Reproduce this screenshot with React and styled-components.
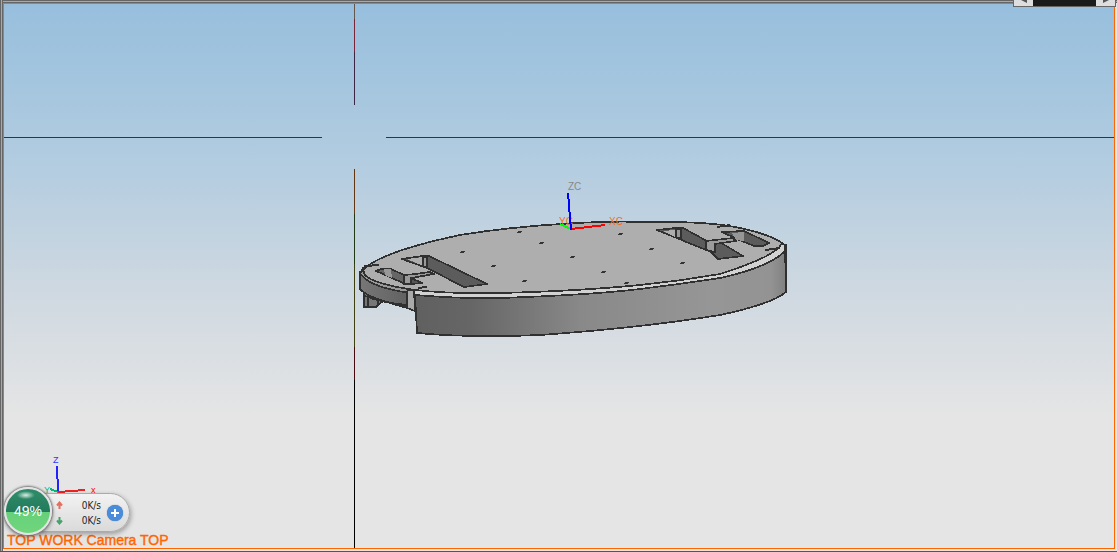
import React from 'react';
import styled, { createGlobalStyle } from 'styled-components';

const Global = createGlobalStyle`
  *, *::before, *::after { box-sizing: border-box; }
  body { margin: 0; overflow: hidden; background: #e4e4e4; font-family: "Liberation Sans", Arial, sans-serif; }
`;

const Frame = styled.main`
  display: grid;
  grid-template-rows: 1fr;
  height: 100vh;
  padding: 3px 2px 2px 3px;
  background:
    linear-gradient(90deg, #666 1px, #a8a8a8 1px 2px, #666 2px) left / 3px 100% no-repeat,
    linear-gradient(#666 1px, #a8a8a8 1px 2px, #666 2px) top / 100% 3px no-repeat,
    #e4e4e4;
  border-bottom: 1px solid #555;
  position: relative;
`;

const Viewport = styled.section`
  position: relative;
  display: flex;
  flex-direction: column;
  justify-content: flex-end;
  overflow: hidden;
  border: 1px solid #f60;
  background: linear-gradient(#97bfdd 0%, #b0cbe0 27%, #d0d9e1 54%, #e5e5e5 76%, #e5e5e5 100%);
`;

const Scene = styled.svg`
  position: absolute;
  left: 0;
  top: 0;
  shape-rendering: crispEdges;
  font-family: "Liberation Sans", Arial, sans-serif;
`;

const ViewLabel = styled.h1`
  position: relative;
  margin: 0 0 0 3px;
  font-size: 14px;
  line-height: 16px;
  font-weight: 400;
  color: #f60;
  -webkit-text-stroke: 0.4px #f60;
`;

const Monitor = styled.aside`
  position: absolute;
  left: 0;
  bottom: 13px;
  display: flex;
  align-items: center;
`;

const Gauge = styled.div`
  position: relative;
  z-index: 1;
  display: grid;
  place-items: center;
  width: 48px;
  height: 48px;
  border: 2px solid #e4e4e4;
  border-radius: 50%;
  color: #fff;
  font-size: 14px;
  background:
    radial-gradient(ellipse 9px 4px at 45% 14%, #d8eee6, transparent),
    linear-gradient(#2d8a68 0 10%, #237a5a 52%, #66d07a 52%, #6fd67c 100%);
  box-shadow: 0 0 2px 1px #777, 0 2px 5px #0006;
`;

const Panel = styled.div`
  display: flex;
  align-items: center;
  gap: 6px;
  width: 92px;
  height: 39px;
  margin: 3px 0 0 -14px;
  padding: 0 6px 0 17px;
  border: 1px solid #aaa;
  border-radius: 0 20px 20px 0;
  background: linear-gradient(#f2f2f2, #dadada);
  box-shadow: 1px 2px 5px #0005;
`;

const Rates = styled.ul`
  flex: 1;
  margin: 0;
  padding: 0;
  list-style: none;
`;

const Rate = styled.li`
  display: flex;
  align-items: center;
  justify-content: space-between;
  font: 10px/15px "DejaVu Sans Condensed", "DejaVu Sans", sans-serif;
  color: #222;
`;

const AddButton = styled.button`
  display: grid;
  place-items: center;
  width: 16px;
  height: 16px;
  padding: 0;
  border: 0;
  border-radius: 50%;
  background: #4b8cda;
  box-shadow: 0 0 1px #2866b0;
`;

const Strip = styled.div`
  position: absolute;
  top: 0;
  right: 1px;
  display: flex;
  justify-content: space-between;
  width: 103px;
  height: 7px;
  border: 1px solid #666;
  border-top: 0;
  background: #1b1b1b;
`;

const ScrollButton = styled.button`
  display: flex;
  justify-content: center;
  width: 19px;
  height: 6px;
  padding: 0;
  border: 0;
  background: #dedede;
`;

function Arrow({ down, color }) {
  return (
    <svg width="7" height="9" viewBox="0 0 7 9" aria-hidden="true">
      <path d={down ? 'M3.5 1V7M1 4.5L3.5 7.5L6 4.5' : 'M3.5 8V2M1 4.5L3.5 1.5L6 4.5'} fill="none" stroke={color} strokeWidth="2" />
    </svg>
  );
}

const holes = [[519, 232], [541, 243], [620, 234], [651, 249], [572, 257], [603, 272], [682, 263], [462, 252], [493, 266], [524, 281], [626, 283]];

function Model() {
  return (
    <g stroke="#303030" strokeWidth="1.7" strokeLinejoin="round">
      <path d="M364 288V307H376L383 301L407 308V295Z" fill="#777" />
      <path d="M368 295V307M378 297V305" fill="none" />
      <path d="M360 272V289Q370 300 410 307V290Z" fill="url(#leftWall)" />
      <path d="M365 296Q382 303 408 305" fill="none" />
      <path d="M415 294L417 333Q470 338 540 335Q640 328 720 315Q772 304 786 292V245L700 270L560 292Z" fill="url(#wall)" />
      <path d="M785 250V263" strokeWidth="3" />
      <path d="M360 273Q368 287 410 293L415 295Q465 299 500 298Q590 295 640 289Q681 284 720 278Q770 267 785 251V245L770 240L640 260L430 285L365 266Z" fill="#d2d2d2" />
      <path d="M360 273Q368 287 410 293V288L372 272L363 268Z" fill="#999" />
      <path d="M363 270Q380 252 460 235C540 222 620 221 640 222Q705 221 735 227Q770 234 782 243Q777 256 720 274Q680 281 640 285Q580 291 500 293Q450 294 415 290Q373 284 365 275Z" fill="#aeaeae" />
      <path d="M360 275Q361 271 363 270M782 243L785 245V250" fill="none" />
      <path d="M407 292Q408 289 414 290L415 311L407 308Z" fill="#aaa" />
      <path d="M376 271L381 269H391L404 275H416L430 272L434 274L416 277L411 280L422 283L405 284L390 277Z" fill="#666" />
      <path d="M384 269L391 269L392 278L385 275Z" fill="#999" stroke="none" />
      <path d="M404 275L416 274L429 272L434 274L411 278V284H404Z" fill="#999" />
      <path d="M411 278L422 283L411 284Z" fill="#555" />
      <path d="M402 259L422 256H429L487 284L464 287L427 268Z" fill="#5c5c5c" />
      <path d="M407 259L423 257V266Z" fill="#aeaeae" stroke="none" />
      <path d="M423 257H427V268L423 266Z" fill="#999" />
      <path d="M657 230L676 228H683L707 241L715 240L723 240V244L743 256L718 259L711 252Z" fill="#5c5c5c" />
      <path d="M663 231L675 230V237Z" fill="#aeaeae" stroke="none" />
      <path d="M676 229H681V239L676 237Z" fill="#999" />
      <path d="M706 241L733 238L736 241L715 244V252L706 250Z" fill="#9c9c9c" />
      <path d="M722 232L744 231L769 243L763 246H754L737 239Z" fill="#5c5c5c" />
      <path d="M732 233L744 232V241L736 240Z" fill="#969696" stroke="none" />
      <path d="M366 266L379 265M418 288L427 287M717 227L730 225M765 250L780 248" fill="none" strokeWidth="2" />
      <g stroke="none" fill="#333">{holes.map(([x, y]) => <path key={x} d={`M${x - 1} ${y - 1}h4v1h-1v1h-4v-1h1z`} />)}</g>
    </g>
  );
}

export default function App() {
  return (
    <>
      <Global />
      <Frame>
        <Viewport>
          <Scene width="100%" height="100%" role="img" aria-label="Round plate model">
            <defs>
              <linearGradient id="wall"><stop stopColor="#606060" /><stop offset=".15" stopColor="#666" /><stop offset=".45" stopColor="#898989" /><stop offset=".8" stopColor="#969696" /><stop offset=".96" stopColor="#939393" /><stop offset="1" stopColor="#808080" /></linearGradient>
              <linearGradient id="leftWall"><stop stopColor="#777" /><stop offset="1" stopColor="#606060" /></linearGradient>
            </defs>
            <g transform="translate(-4 -4)">
              <path d="M354 4h1v15h-1z" fill="#65594d" />
              <path d="M354 19h1v33h-1z" fill="#7a2438" />
              <path d="M354 52h1v53h-1z" fill="#3c2545" />
              <path d="M354 169h1v45h-1z" fill="#633510" />
              <path d="M354 214h1v50h-1z" fill="#203814" />
              <path d="M354 264h1v83h-1z" fill="#3f4010" />
              <path d="M354 347h1v33h-1z" fill="#440a10" />
              <path d="M354 380h1v168h-1z" fill="#000" />
              <rect y="137" width="322" height="1" fill="#3a2e48" />
              <rect x="386" y="137" width="100%" height="1" fill="#3a2e48" />
              <Model />
              <text x="559" y="225" fill="#f07020" fontSize="10">YC</text>
              <g fill="none" strokeWidth="2">
                <path d="M571 229L560 224" stroke="#0f0" />
                <path d="M571 229L605 225" stroke="red" />
                <path d="M568 193L571 230" stroke="#00f" />
              </g>
              <g fill="#f07020" fontSize="10">
                <text x="568" y="190" fill="#888">ZC</text>
                <text x="609" y="225">XC</text>
              </g>
              <path d="M58 491L57 466" stroke="#22f" strokeWidth="2" />
              <path d="M58 492L85 490" stroke="#e22" strokeWidth="2" />
              <path d="M58 492L50 489" stroke="#0b7" strokeWidth="2" />
              <g fontSize="9">
                <text x="53" y="463" fill="#33f">Z</text>
                <text x="44" y="493" fill="#0b8">Y</text>
                <text x="91" y="493" fill="red">x</text>
              </g>
            </g>
          </Scene>
          <ViewLabel>TOP WORK Camera TOP</ViewLabel>
          <Monitor>
            <Gauge>49%</Gauge>
            <Panel>
              <Rates>
                <Rate><Arrow color="#e56d5c" />0K/s</Rate>
                <Rate><Arrow down color="#43a467" />0K/s</Rate>
              </Rates>
              <AddButton aria-label="Open monitor">
                <svg width="10" height="10" viewBox="0 0 10 10"><path d="M5 1V9M1 5H9" stroke="#fff" strokeWidth="2" /></svg>
              </AddButton>
            </Panel>
          </Monitor>
        </Viewport>
        <Strip>
          <ScrollButton aria-label="Scroll left"><svg width="8" height="4"><path d="M1 0H7V3Z" fill="#555" /></svg></ScrollButton>
          <ScrollButton aria-label="Scroll right"><svg width="8" height="4"><path d="M1 0H7L1 3Z" fill="#555" /></svg></ScrollButton>
        </Strip>
      </Frame>
    </>
  );
}
